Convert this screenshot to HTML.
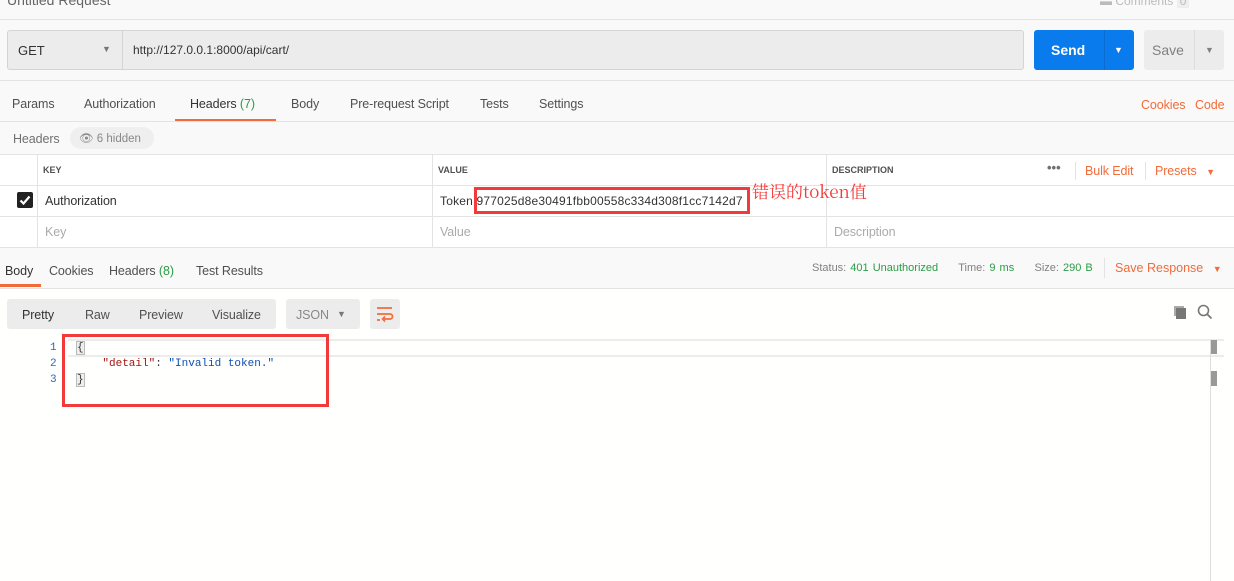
<!DOCTYPE html>
<html><head><meta charset="utf-8"><style>
*{box-sizing:border-box;margin:0;padding:0}
body{width:1234px;height:581px;overflow:hidden;background:#f9f9f9;font-family:"Liberation Sans","Noto Sans CJK SC",sans-serif;font-size:12px;color:#505050;position:relative}
.a{position:absolute;white-space:nowrap}
.hl{position:absolute;left:0;width:1234px;height:1px;background:#e3e3e3}
.o{color:#f26b3a}.g{color:#2a9d45}
.mono{font-family:"Liberation Mono",monospace;font-size:11px}
.t{font-size:12.5px;letter-spacing:-0.1px}
</style></head><body>
<div class="a" style="left:7px;top:-8px;font-size:14px;color:#666">Untitled Request</div>
<div class="a" style="left:1100px;top:-6px;color:#bbb">▬ Comments <span style="background:#eee;padding:0 3px">0</span></div>
<div class="hl" style="top:19px"></div>
<div class="a" style="left:7px;top:30px;width:1017px;height:40px;background:#ececec;border:1px solid #d4d4d4;border-radius:3px"></div>
<div class="a" style="left:122px;top:31px;width:1px;height:38px;background:#d4d4d4"></div>
<div class="a" style="left:18px;top:43px;font-size:13px;color:#333">GET</div>
<div class="a" style="left:102px;top:44px;font-size:9px;color:#777">▼</div>
<div class="a" style="left:133px;top:43px;font-size:12px;color:#333">http://127.0.0.1:8000/api/cart/</div>
<div class="a" style="left:1034px;top:30px;width:100px;height:40px;background:#097bed;border-radius:3px"></div>
<div class="a" style="left:1104px;top:30px;width:1px;height:40px;background:#0a6bd0"></div>
<div class="a" style="left:1051px;top:42px;font-size:14px;font-weight:bold;color:#fff">Send</div>
<div class="a" style="left:1114px;top:45px;font-size:9px;color:#fff">▼</div>
<div class="a" style="left:1144px;top:30px;width:80px;height:40px;background:#ececec;border-radius:3px"></div>
<div class="a" style="left:1194px;top:30px;width:1px;height:40px;background:#dcdcdc"></div>
<div class="a" style="left:1152px;top:42px;font-size:14px;color:#808080">Save</div>
<div class="a" style="left:1205px;top:45px;font-size:9px;color:#808080">▼</div>
<div class="hl" style="top:80px"></div>
<div class="a t" style="left:12px;top:97px">Params</div>
<div class="a t" style="left:84px;top:97px">Authorization</div>
<div class="a t" style="left:190px;top:97px;color:#333">Headers <span class="g">(7)</span></div>
<div class="a" style="left:175px;top:119px;width:101px;height:2px;background:#f26b3a"></div>
<div class="a t" style="left:291px;top:97px">Body</div>
<div class="a t" style="left:350px;top:97px">Pre-request Script</div>
<div class="a t" style="left:480px;top:97px">Tests</div>
<div class="a t" style="left:539px;top:97px">Settings</div>
<div class="a o t" style="left:1141px;top:98px">Cookies</div>
<div class="a o t" style="left:1195px;top:98px">Code</div>
<div class="hl" style="top:121px"></div>
<div class="a t" style="left:13px;top:132px;color:#707070">Headers</div>
<div class="a" style="left:70px;top:127px;width:84px;height:22px;background:#efefef;border-radius:11px"></div>
<div class="a" style="left:79px;top:131px;font-size:11.5px;color:#888">👁︎ 6 hidden</div>
<div class="a" style="left:0;top:154px;width:1234px;height:94px;background:#fff"></div>
<div class="hl" style="top:154px"></div>
<div class="hl" style="top:185px"></div>
<div class="hl" style="top:216px"></div>
<div class="hl" style="top:247px"></div>
<div class="a" style="left:37px;top:154px;width:1px;height:94px;background:#e3e3e3"></div>
<div class="a" style="left:432px;top:154px;width:1px;height:94px;background:#e3e3e3"></div>
<div class="a" style="left:826px;top:154px;width:1px;height:94px;background:#e3e3e3"></div>
<div class="a" style="left:43px;top:165px;font-size:9px;font-weight:bold;color:#505050">KEY</div>
<div class="a" style="left:438px;top:165px;font-size:9px;font-weight:bold;color:#505050">VALUE</div>
<div class="a" style="left:832px;top:165px;font-size:9px;font-weight:bold;color:#505050">DESCRIPTION</div>
<div class="a" style="left:1047px;top:160px;font-size:13px;color:#707070;font-weight:bold">•••</div>
<div class="a" style="left:1075px;top:162px;width:1px;height:18px;background:#e3e3e3"></div>
<div class="a o t" style="left:1085px;top:164px">Bulk Edit</div>
<div class="a" style="left:1145px;top:162px;width:1px;height:18px;background:#e3e3e3"></div>
<div class="a o t" style="left:1155px;top:164px">Presets <span style="font-size:9px;margin-left:6px">▼</span></div>
<div class="a" style="left:17px;top:192px;width:16px;height:16px;background:#222;border-radius:2px"></div>
<svg class="a" style="left:17px;top:192px" width="16" height="16"><path d="M3.5 8.5 L6.5 11.5 L12.5 4.5" stroke="#fff" stroke-width="2.2" fill="none"/></svg>
<div class="a t" style="left:45px;top:194px;color:#333">Authorization</div>
<div class="a" style="left:440px;top:194px;font-size:12px;letter-spacing:0.2px;color:#333">Token 977025d8e30491fbb00558c334d308f1cc7142d7</div>
<div class="a" style="left:474px;top:187px;width:276px;height:27px;border:3px solid #f33a3a"></div>
<div class="a" style="left:752px;top:178px;font-size:17px;color:#f33a3a;font-family:'Noto Serif CJK SC','Liberation Serif',serif">错误的token值</div>
<div class="a t" style="left:45px;top:225px;color:#aaa">Key</div>
<div class="a t" style="left:440px;top:225px;color:#aaa">Value</div>
<div class="a t" style="left:834px;top:225px;color:#aaa">Description</div>
<div class="a t" style="left:5px;top:264px;color:#333">Body</div>
<div class="a" style="left:0;top:284px;width:41px;height:3px;background:#f26b3a"></div>
<div class="a t" style="left:49px;top:264px">Cookies</div>
<div class="a t" style="left:109px;top:264px">Headers <span class="g">(8)</span></div>
<div class="a t" style="left:196px;top:264px">Test Results</div>
<div class="a" style="left:812px;top:262px;font-size:11px;color:#808080;word-spacing:1px">Status: <span class="g">401 Unauthorized</span>&nbsp;&nbsp;&nbsp;&nbsp; Time: <span class="g">9 ms</span>&nbsp;&nbsp;&nbsp;&nbsp; Size: <span class="g">290 B</span></div>
<div class="a" style="left:1104px;top:258px;width:1px;height:20px;background:#e3e3e3"></div>
<div class="a o" style="left:1115px;top:261px;font-size:12.5px">Save Response <span style="font-size:9px;margin-left:6px">▼</span></div>
<div class="hl" style="top:288px"></div>
<div class="a" style="left:0;top:289px;width:1234px;height:292px;background:#fffffd"></div>
<div class="a" style="left:7px;top:299px;width:269px;height:30px;background:#ececec;border-radius:3px"></div>
<div class="a t" style="left:22px;top:308px;color:#333">Pretty</div>
<div class="a t" style="left:85px;top:308px">Raw</div>
<div class="a t" style="left:139px;top:308px">Preview</div>
<div class="a t" style="left:212px;top:308px">Visualize</div>
<div class="a" style="left:286px;top:299px;width:74px;height:30px;background:#ececec;border-radius:3px"></div>
<div class="a t" style="left:296px;top:308px;color:#888">JSON</div>
<div class="a" style="left:337px;top:309px;font-size:9px;color:#777">▼</div>
<div class="a" style="left:370px;top:299px;width:30px;height:30px;background:#ececec;border-radius:3px"></div>
<svg class="a" style="left:375px;top:305px" width="20" height="18"><path d="M2 3H17M2 9H15a2.5 2.5 0 0 1 0 5H9M2 15H5" stroke="#f26b3a" stroke-width="1.8" fill="none"/><path d="M10 11.5L7.5 14L10 16.5" stroke="#f26b3a" stroke-width="1.6" fill="none"/></svg>
<svg class="a" style="left:1172px;top:304px" width="16" height="16"><rect x="2" y="2" width="10" height="10" fill="#aaa"/><rect x="4" y="4" width="10" height="11" fill="#777"/></svg>
<svg class="a" style="left:1197px;top:304px" width="16" height="16"><circle cx="6.5" cy="6.5" r="5" stroke="#777" stroke-width="1.6" fill="none"/><path d="M10 10L14.5 14.5" stroke="#777" stroke-width="1.8"/></svg>
<div class="a" style="left:68px;top:339px;width:1156px;height:18px;border-top:2px solid #ececec;border-bottom:2px solid #ececec"></div>
<div class="a" style="left:1210px;top:339px;width:1px;height:242px;background:#ddd"></div>
<div class="a" style="left:1211px;top:340px;width:6px;height:14px;background:#999"></div>
<div class="a" style="left:1211px;top:371px;width:6px;height:15px;background:#999"></div>
<div class="a mono" style="left:50px;top:340px;color:#2a6bb5;line-height:16px">1<br>2<br>3</div>
<div class="a mono" style="left:76px;top:340px;line-height:16px;color:#333"><span style="border:1px solid #bbb;background:#eee">{</span><br>&nbsp;&nbsp;&nbsp;&nbsp;<span style="color:#a31515">"detail"</span>: <span style="color:#0b4fb5">"Invalid token."</span><br><span style="border:1px solid #bbb;background:#eee">}</span></div>
<div class="a" style="left:62px;top:334px;width:267px;height:73px;border:3px solid #f33a3a"></div>
</body></html>
